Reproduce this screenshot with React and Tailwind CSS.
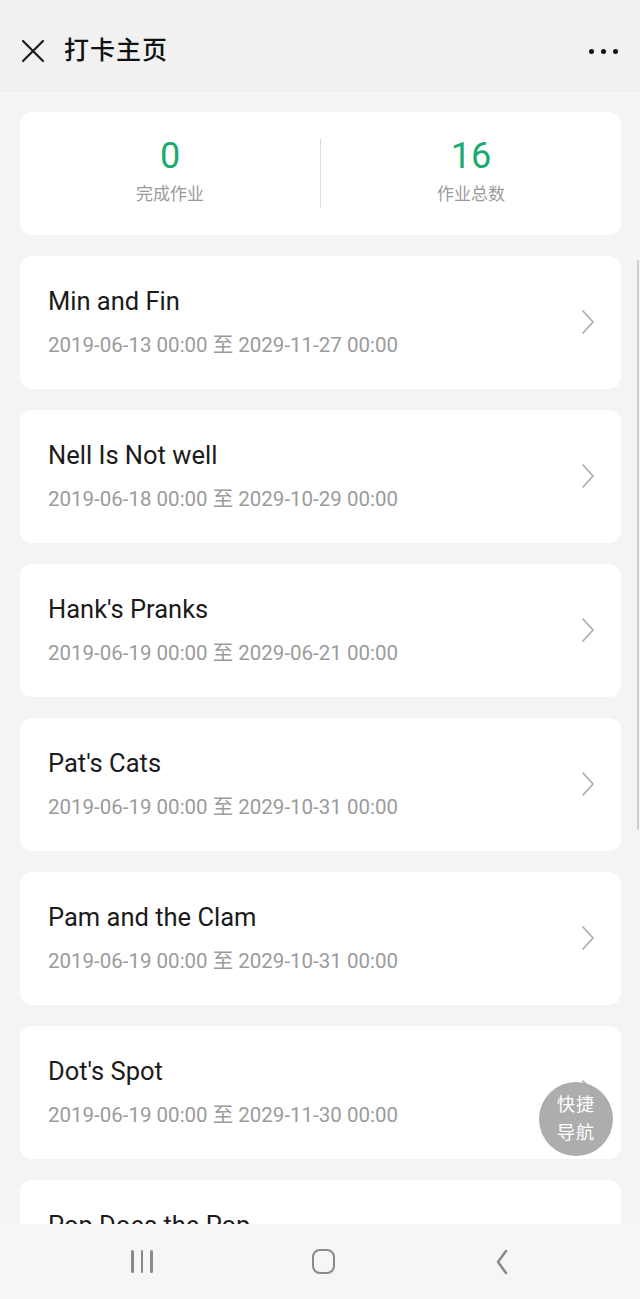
import React from "react";

const tasks = [
  { title: "Min and Fin", range: "2019-06-13 00:00 至 2029-11-27 00:00" },
  { title: "Nell Is Not well", range: "2019-06-18 00:00 至 2029-10-29 00:00" },
  { title: "Hank's Pranks", range: "2019-06-19 00:00 至 2029-06-21 00:00" },
  { title: "Pat's Cats", range: "2019-06-19 00:00 至 2029-10-31 00:00" },
  { title: "Pam and the Clam", range: "2019-06-19 00:00 至 2029-10-31 00:00" },
  { title: "Dot's Spot", range: "2019-06-19 00:00 至 2029-11-30 00:00" },
  { title: "Pop Does the Pop", range: "2019-06-19 00:00 至 2029-11-30 00:00" },
];

const font = { fontFamily: "Roboto, 'Noto Sans CJK SC', sans-serif" };

const Chevron = () => (
  <svg width="14" height="26" viewBox="0 0 14 26" fill="none">
    <path d="M2 2 L12 13 L2 24" stroke="#a8a8a8" strokeWidth="1.6" strokeLinecap="round" strokeLinejoin="round" />
  </svg>
);

const TaskCard = ({ title, range }) => (
  <div className="flex items-center h-[133px] shrink-0 rounded-[12px] bg-white pl-[28px] pr-[26px] pb-[2px]">
    <div className="flex-1 flex flex-col">
      <div className="text-[25.5px] leading-[32px] text-[#1b1b1b]">{title}</div>
      <div className="mt-[14px] text-[20.5px] leading-[28px] text-[#9b9b9b]">{range}</div>
    </div>
    <Chevron />
  </div>
);

export default function App() {
  return (
    <div className="relative w-[640px] h-[1299px] overflow-hidden bg-[#f4f4f4]" style={font}>
      {/* header */}
      <div className="flex items-center h-[90px] pt-3 px-[21px] bg-[#f1f1f1] shadow-[0_1px_2px_rgba(0,0,0,0.05)] relative z-10">
        <svg width="24" height="24" viewBox="0 0 24 24" fill="none">
          <path d="M2 2 L22 22 M22 2 L2 22" stroke="#1a1a1a" strokeWidth="2.2" strokeLinecap="round" />
        </svg>
        <div className="ml-[19px] text-[25px] font-medium text-[#111] tracking-[1px]">打卡主页</div>
        <div className="ml-auto flex gap-[7px] pr-[1px]">
          <span className="w-[5px] h-[5px] rounded-full bg-[#111]" />
          <span className="w-[5px] h-[5px] rounded-full bg-[#111]" />
          <span className="w-[5px] h-[5px] rounded-full bg-[#111]" />
        </div>
      </div>

      {/* scroll content */}
      <div className="relative h-[1134px] overflow-hidden">
        <div className="flex flex-col gap-[21px] pt-[22px] px-[20px] pr-[19px]">
          <div className="flex items-center h-[123px] shrink-0 rounded-[12px] bg-white pb-[5px]">
            <div className="flex-1 flex flex-col items-center">
              <div className="text-[36px] leading-[40px] text-[#1aab72]">0</div>
              <div className="mt-[6px] text-[17px] leading-[24px] text-[#9a9a9a]">完成作业</div>
            </div>
            <div className="w-px h-[69px] bg-[#dcdcdc] mt-[5px]" />
            <div className="flex-1 flex flex-col items-center">
              <div className="text-[36px] leading-[40px] text-[#1aab72]">16</div>
              <div className="mt-[6px] text-[17px] leading-[24px] text-[#9a9a9a]">作业总数</div>
            </div>
          </div>
          {tasks.map((t) => (
            <TaskCard key={t.title} {...t} />
          ))}
        </div>
        {/* scrollbar */}
        <div className="absolute right-[1px] top-[170px] w-[2px] h-[570px] bg-[#cfcfcf] rounded-full" />
      </div>

      {/* floating nav button */}
      <div className="absolute left-[539px] top-[1082px] w-[74px] h-[74px] rounded-full bg-[#a9a9a9]/95 flex flex-col items-center justify-center text-white text-[18px] leading-[28px] tracking-[1px]">
        <span>快捷</span>
        <span>导航</span>
      </div>

      {/* system nav bar */}
      <div className="flex items-center justify-between h-[75px] bg-[#f6f6f6] pl-[131px] pr-[131px]">
        <div className="flex gap-[7px]">
          <span className="w-[2.5px] h-[23px] bg-[#8a8a8a] rounded" />
          <span className="w-[2.5px] h-[23px] bg-[#8a8a8a] rounded" />
          <span className="w-[2.5px] h-[23px] bg-[#8a8a8a] rounded" />
        </div>
        <div className="w-[23px] h-[25px] rounded-[8px] border-[2.5px] border-[#8a8a8a]" />
        <svg width="14" height="26" viewBox="0 0 14 26" fill="none">
          <path d="M11 2 L3 13 L11 24" stroke="#8a8a8a" strokeWidth="2.5" strokeLinecap="round" strokeLinejoin="round" />
        </svg>
      </div>
    </div>
  );
}
